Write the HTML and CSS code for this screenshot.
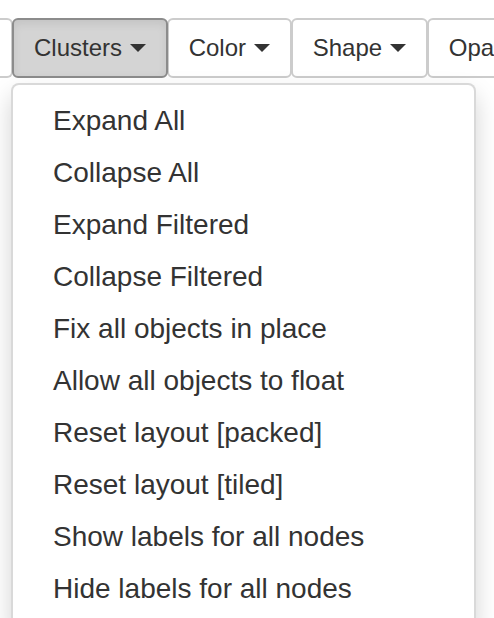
FILE: index.html
```html
<!DOCTYPE html>
<html>
<head>
<meta charset="utf-8">
<link rel="stylesheet" href="styles.css">
</head>
<body>
<div class="toolbar">
  <div class="btn prev"></div>
  <div class="group open">
    <button class="btn active">Clusters <span class="caret"></span></button>
    <ul class="menu">
      <li>Expand All</li>
      <li>Collapse All</li>
      <li>Expand Filtered</li>
      <li>Collapse Filtered</li>
      <li>Fix all objects in place</li>
      <li>Allow all objects to float</li>
      <li>Reset layout [packed]</li>
      <li>Reset layout [tiled]</li>
      <li>Show labels for all nodes</li>
      <li>Hide labels for all nodes</li>
    </ul>
  </div>
  <button class="btn">Color <span class="caret"></span></button>
  <button class="btn">Shape <span class="caret"></span></button>
  <button class="btn">Opacity <span class="caret"></span></button>
</div>
</body>
</html>
```

FILE: styles.css
```css
html {
  height: 100%;
  overflow: hidden;
}
body {
  box-sizing: border-box;
  height: 100%;
  margin: 0;
  padding: 18px 0 0;
  background: #fff;
  font-family: "Liberation Sans", Arial, Helvetica, sans-serif;
  color: #333;
  overflow: hidden;
}
.toolbar {
  display: flex;
  flex-wrap: nowrap;
  align-items: flex-start;
  white-space: nowrap;
}
.group {
  position: relative;
  display: flex;
}
.btn {
  box-sizing: border-box;
  height: 60px;
  flex: none;
  font-family: inherit;
  font-size: 24px;
  line-height: 36px;
  padding: 10px 20px;
  margin: 0 0 0 -1px;
  color: #333;
  background: #fff;
  border: 2px solid #ccc;
  border-radius: 6px;
}
.btn.prev {
  width: 13px;
  margin-left: 0;
  padding: 0;
  border-left: none;
  border-radius: 0 6px 6px 0;
}
.btn.active {
  position: relative;
  z-index: 2;
  background: #d4d4d4;
  border-color: #8c8c8c;
  box-shadow: inset 0 4px 8px rgba(0,0,0,0.08);
}
.caret {
  display: inline-block;
  width: 0;
  height: 0;
  margin-left: 1px;
  vertical-align: middle;
  border-top: 8px solid #333;
  border-left: 8px solid transparent;
  border-right: 8px solid transparent;
  position: relative;
  top: -2px;
}
.menu {
  position: absolute;
  top: 100%;
  left: -2px;
  z-index: 3;
  box-sizing: border-box;
  width: 465px;
  margin: 5px 0 0;
  padding: 10px 0;
  list-style: none;
  background: #fff;
  border: 2px solid rgba(0,0,0,0.15);
  border-radius: 8px;
  box-shadow: 0 12px 24px rgba(0,0,0,0.175);
}
.menu li {
  font-size: 28px;
  line-height: 40px;
  padding: 6px 40px;
  color: #333;
  white-space: nowrap;
}
```
